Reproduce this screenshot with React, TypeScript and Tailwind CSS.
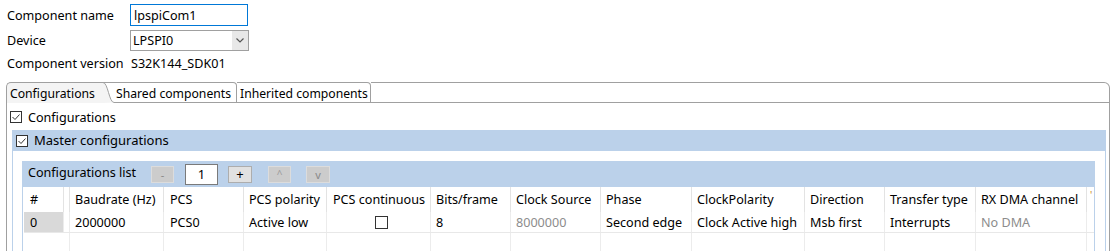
import React from 'react';

function CheckBox({ checked, size = 12 }: { checked?: boolean; size?: number }) {
  return (
    <svg width={size} height={size} viewBox={`0 0 ${size} ${size}`} className="shrink-0">
      <rect x="0.5" y="0.5" width={size - 1} height={size - 1} fill="white" stroke="#333333" />
      {checked && (
        <polyline points="2.5,6 5,8.5 9.5,3.5" fill="none" stroke="#333333" strokeWidth="1" />
      )}
    </svg>
  );
}

const columns = [
  { label: '#', w: 'w-[40px]', pl: 'pl-[6px]' },
  { label: '', w: 'w-[6px]', pl: '' },
  { label: 'Baudrate (Hz)', w: 'w-[94px]', pl: 'pl-[5px]' },
  { label: 'PCS', w: 'w-[80px]', pl: 'pl-[6px]' },
  { label: 'PCS polarity', w: 'w-[83px]', pl: 'pl-[5px]' },
  { label: 'PCS continuous', w: 'w-[104px]', pl: 'pl-[6px]' },
  { label: 'Bits/frame', w: 'w-[80px]', pl: 'pl-[5px]' },
  { label: 'Clock Source', w: 'w-[90px]', pl: 'pl-[5px]' },
  { label: 'Phase', w: 'w-[91px]', pl: 'pl-[5px]' },
  { label: 'ClockPolarity', w: 'w-[113px]', pl: 'pl-[5px]' },
  { label: 'Direction', w: 'w-[80px]', pl: 'pl-[5px]' },
  { label: 'Transfer type', w: 'w-[91px]', pl: 'pl-[5px]' },
  { label: 'RX DMA channel', w: 'w-[111px]', pl: 'pl-[5px]' },
];

const row = ['0', '', '2000000', 'PCS0', 'Active low', 'check', '8', '8000000', 'Second edge', 'Clock Active high', 'Msb first', 'Interrupts', 'No DMA'];
const grayCells = [7, 12];

export default function App() {
  return (
    <div className="w-[1111px] h-[251px] overflow-hidden bg-white text-[12.6px] leading-[17px] text-black font-['Noto_Sans',sans-serif]">
      {/* Header fields */}
      <div className="pl-[7px] pt-[4px]">
        <div className="flex items-center h-[22px]">
          <span className="w-[123px]">Component name</span>
          <div className="w-[118px] h-[22px] border border-[#0078d7] flex items-center pl-[3px]">lpspiCom1</div>
        </div>
        <div className="flex items-center h-[21px] mt-[4px]">
          <span className="w-[123px]">Device</span>
          <div className="w-[119px] h-[21px] border border-[#a0a0a0] flex items-center pl-[2px]">
            <span className="flex-1">LPSPI0</span>
            <div className="w-[16px] h-[19px] bg-[#e8e8e8] flex items-center justify-center">
              <svg width="8" height="5" viewBox="0 0 8 5">
                <polyline points="0.5,0.5 4,4 7.5,0.5" fill="none" stroke="#555555" strokeWidth="1.2" />
              </svg>
            </div>
          </div>
        </div>
        <div className="flex items-center h-[18px] mt-[3px]">
          <span className="w-[124px]">Component version</span>
          <span>S32K144_SDK01</span>
        </div>
      </div>

      {/* Tabs */}
      <div className="flex h-[21px] mt-[10px] ml-[6px] w-[1104px] whitespace-nowrap text-[12.2px]">
        <div className="w-[97px] h-[21px] border-l border-t border-[#a0a0a0] rounded-tl-[5px] bg-[#f4f4f4] flex items-center pl-[3px] pt-[1px]">
          Configurations
        </div>
        <svg width="11" height="21" viewBox="0 0 11 21" className="shrink-0">
          <path d="M0,0.5 C5,0.5 6,20.5 11,20.5 L0,21 Z" fill="#f4f4f4" />
          <path d="M0,0.5 L11,0.5" stroke="#a0a0a0" />
          <path d="M0,0.5 C5,0.5 6,20.5 11,20.5" fill="none" stroke="#a0a0a0" />
        </svg>
        <div className="w-[123px] h-[21px] shrink-0 border-t border-b border-r border-[#a0a0a0] rounded-tr-[4px] flex items-center pl-[2px] pt-[1px]">
          Shared components
        </div>
        <div className="w-[134px] h-[21px] shrink-0 border-t border-b border-r border-[#a0a0a0] rounded-tr-[4px] flex items-center pl-[3px] pt-[1px]">
          Inherited components
        </div>
        <div className="flex-1 h-[21px] border-t border-b border-r border-[#a0a0a0] rounded-tr-[6px]" />
      </div>

      {/* Tab content */}
      <div className="ml-[6px] w-[1104px] h-[160px] border-l border-r border-[#a0a0a0]">
        <div className="flex items-center h-[27px] pl-[3px] gap-[6px] pt-[1px]">
          <CheckBox checked />
          <span>Configurations</span>
        </div>

        <div className="ml-[5px] w-[1094px]">
          <div className="h-[21px] bg-[#bbd1ea] flex items-center pl-[4px] gap-[6px]">
            <CheckBox checked />
            <span className="text-[13px]">Master configurations</span>
          </div>
          <div className="h-[120px] border-l border-r border-[#bbd1ea] pl-[9px] pt-[10px]">
            <div className="w-[1073px] h-[120px] border-l border-r border-[#bbd1ea]">
              <div className="h-[26px] bg-[#bbd1ea] flex items-center pl-[5px]">
                <span className="w-[123px] -mt-[4px]">Configurations list</span>
                <div className="w-[23px] h-[17px] bg-[#cccccc] border border-[#dcdcdc] flex items-center justify-center text-[#8a8a8a] text-[11px]">-</div>
                <div className="w-[33px] h-[21px] ml-[11px] bg-white border border-[#7a7a7a] flex items-center justify-center text-[13px]">1</div>
                <div className="w-[24px] h-[17px] ml-[10px] bg-[#e1e1e1] border border-[#adadad] flex items-center justify-center text-[13px]">+</div>
                <div className="w-[23px] h-[17px] ml-[16px] bg-[#cccccc] border border-[#dcdcdc] flex items-center justify-center text-[#9a9a9a] text-[10px]">^</div>
                <div className="w-[24px] h-[17px] ml-[15px] bg-[#cccccc] border border-[#dcdcdc] flex items-center justify-center text-[#8a8a8a] text-[11px]">v</div>
              </div>
              <div className="pl-[1px]">
                <div className="flex h-[25px] items-center">
                  {columns.map((c, i) => (
                    <div key={i} className={`${c.w} ${c.pl} h-[25px] shrink-0 flex items-center border-r border-[#e3e3e3] whitespace-nowrap overflow-hidden`}>
                      {c.label}
                    </div>
                  ))}
                  <div className="flex-1 h-[25px] pl-[3px] text-[#c88a2a] text-[10px]">'</div>
                </div>
                <div className="flex h-[21px] border-b border-[#e8e8e8]">
                  {columns.map((c, i) => (
                    <div
                      key={i}
                      className={`${c.w} ${c.pl} h-[20px] shrink-0 flex items-center pt-[1px] border-r border-[#ececec] whitespace-nowrap overflow-hidden ${i === 0 ? 'bg-[#d9d9d9]' : ''} ${grayCells.includes(i) ? 'text-[#8c8c8c]' : ''} ${row[i] === 'check' ? 'justify-center pl-0' : ''}`}
                    >
                      {row[i] === 'check' ? <CheckBox size={13} /> : row[i]}
                    </div>
                  ))}
                  <div className="flex-1" />
                </div>
                <div className="flex h-[30px]">
                  {columns.map((c, i) => (
                    <div key={i} className={`${c.w} h-[30px] shrink-0 ${i === 0 ? '' : 'border-r border-[#ececec]'}`} />
                  ))}
                </div>
              </div>
            </div>
          </div>
        </div>
      </div>
    </div>
  );
}
